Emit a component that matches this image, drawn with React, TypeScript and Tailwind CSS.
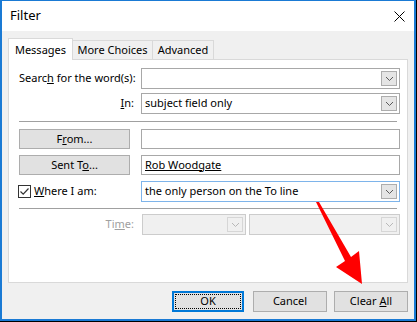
import React from "react";

const font = { fontFamily: '"Noto Sans", "Liberation Sans", sans-serif' };

function Chevron({ disabled }: { disabled?: boolean }) {
  return (
    <svg width="9" height="6" viewBox="0 0 9 6">
      <path
        d="M1 1 L4.5 4.5 L8 1"
        fill="none"
        stroke={disabled ? "#b8b8b8" : "#5a5a5a"}
        strokeWidth="1"
      />
    </svg>
  );
}

function Combo({
  value,
  focused,
  disabled,
  className,
}: {
  value?: string;
  focused?: boolean;
  disabled?: boolean;
  className?: string;
}) {
  return (
    <div
      className={`h-[21px] flex items-center border ${
        focused
          ? "border-[#7eb4ea] bg-white"
          : disabled
          ? "border-[#cccccc] bg-[#f0f0f0]"
          : "border-[#a8a8a8] bg-white"
      } ${className ?? ""}`}
    >
      <span className="flex-1 pl-[3px] whitespace-nowrap overflow-hidden">{value}</span>
      <div
        className={`w-[16px] h-[15px] mr-[2px] shrink-0 flex items-center justify-center border ${
          disabled ? "border-[#d6d6d6] bg-[#f0f0f0]" : "border-[#adadad] bg-[#e5e5e5]"
        }`}
      >
        <Chevron disabled={disabled} />
      </div>
    </div>
  );
}

function Btn({
  children,
  className,
}: {
  children: React.ReactNode;
  className?: string;
}) {
  return (
    <div
      className={`h-[20px] flex items-center justify-center border border-[#adadad] bg-[#e1e1e1] ${
        className ?? ""
      }`}
    >
      <span className="whitespace-nowrap">{children}</span>
    </div>
  );
}

export default function App() {
  return (
    <div className="w-[417px] h-[322px] border-r border-b border-black text-[11px]" style={font}>
      <div className="relative w-full h-full flex flex-col border-t border-l-2 border-r-2 border-b-2 border-[#1a7ad4] bg-[#f0f0f0] text-black">
        {/* title bar */}
        <div className="h-[30px] shrink-0 bg-white flex items-center justify-between pl-[8px] pr-[9px]">
          <span className="text-[13px]">Filter</span>
          <svg width="11" height="11" viewBox="0 0 11 11">
            <path d="M0.5 0.5 L10.5 10.5 M10.5 0.5 L0.5 10.5" stroke="#000" strokeWidth="1" />
          </svg>
        </div>

        <div className="flex-1 flex flex-col px-[6px] pt-[6px]">
          {/* tabs */}
          <div className="flex items-end h-[22px]">
            <div className="h-[22px] w-[65px] bg-white border border-b-0 border-[#d9d9d9] flex items-start justify-center pt-[3px] relative z-10 mb-[-1px]">
              Messages
            </div>
            <div className="h-[19px] w-[80px] border border-l-0 border-b-0 border-[#d9d9d9] bg-[#f0f0f0] flex items-center justify-center">
              More Choices
            </div>
            <div className="h-[19px] w-[61px] border border-l-0 border-b-0 border-[#d9d9d9] bg-[#f0f0f0] flex items-center justify-center">
              Advanced
            </div>
          </div>

          {/* panel */}
          <div className="h-[224px] bg-white border border-[#d9d9d9] pl-[10px] pr-[7px] pt-[8px]">
            <div className="flex items-center h-[21px]">
              <span className="w-[122px] shrink-0 whitespace-nowrap">
                Searc<u>h</u> for the word(s):
              </span>
              <Combo className="flex-1" />
            </div>
            <div className="flex items-center h-[21px] mt-[4px]">
              <span className="w-[122px] shrink-0 text-right pr-[7px]">
                <u>I</u>n:
              </span>
              <Combo className="flex-1" value="subject field only" />
            </div>
            <div className="h-px bg-[#a0a0a0] mt-[7px] mr-[3px]" />
            <div className="flex items-center h-[20px] mt-[7px]">
              <Btn className="w-[111px] shrink-0">
                F<u>r</u>om...
              </Btn>
              <div className="ml-[11px] flex-1 h-[20px] border border-[#a8a8a8]" />
            </div>
            <div className="flex items-center h-[20px] mt-[6px]">
              <Btn className="w-[111px] shrink-0">
                Sent T<u>o</u>...
              </Btn>
              <div className="ml-[11px] flex-1 h-[20px] border border-[#a8a8a8] flex items-center pl-[3px]">
                <u>Rob Woodgate</u>
              </div>
            </div>
            <div className="flex items-center h-[21px] mt-[6px]">
              <div className="w-[122px] shrink-0 flex items-center">
                <div className="w-[13px] h-[13px] border border-[#333] bg-white flex items-center justify-center ml-[-1px]">
                  <svg width="11" height="11" viewBox="0 0 11 11">
                    <path d="M1.5 5.5 L4.2 8.2 L9.5 2.5" fill="none" stroke="#333" strokeWidth="1.2" />
                  </svg>
                </div>
                <span className="ml-[3px] whitespace-nowrap">
                  <u>W</u>here I am:
                </span>
              </div>
              <Combo className="flex-1" value="the only person on the To line" focused />
            </div>
            <div className="h-px bg-[#a0a0a0] mt-[6px] mr-[3px]" />
            <div className="flex items-center h-[21px] mt-[5px]">
              <span className="w-[123px] shrink-0 text-right pr-[8px] text-[#a0a0a0]">
                Ti<u>m</u>e:
              </span>
              <Combo className="w-[104px] shrink-0" disabled />
              <Combo className="flex-1 ml-[3px]" disabled />
            </div>
          </div>

          {/* buttons */}
          <div className="flex justify-end mt-[8px]">
            <div className="w-[72px] h-[21px] border-2 border-[#0078d7] bg-[#e1e1e1] p-px">
              <div className="w-full h-full border border-dotted border-black flex items-center justify-center">
                OK
              </div>
            </div>
            <Btn className="w-[74px] h-[21px] ml-[9px]">Cancel</Btn>
            <Btn className="w-[74px] h-[21px] ml-[7px]">
              Clear <u>A</u>ll
            </Btn>
          </div>
        </div>

        {/* red arrow annotation */}
        <svg
          className="absolute left-[-2px] top-[-1px] pointer-events-none"
          width="417"
          height="322"
          viewBox="0 0 417 322"
        >
          <polygon
            points="316,202 319,202 351,257 359,251 362,284 336,267 345,261"
            fill="#ff0000"
          />
        </svg>
      </div>
    </div>
  );
}
